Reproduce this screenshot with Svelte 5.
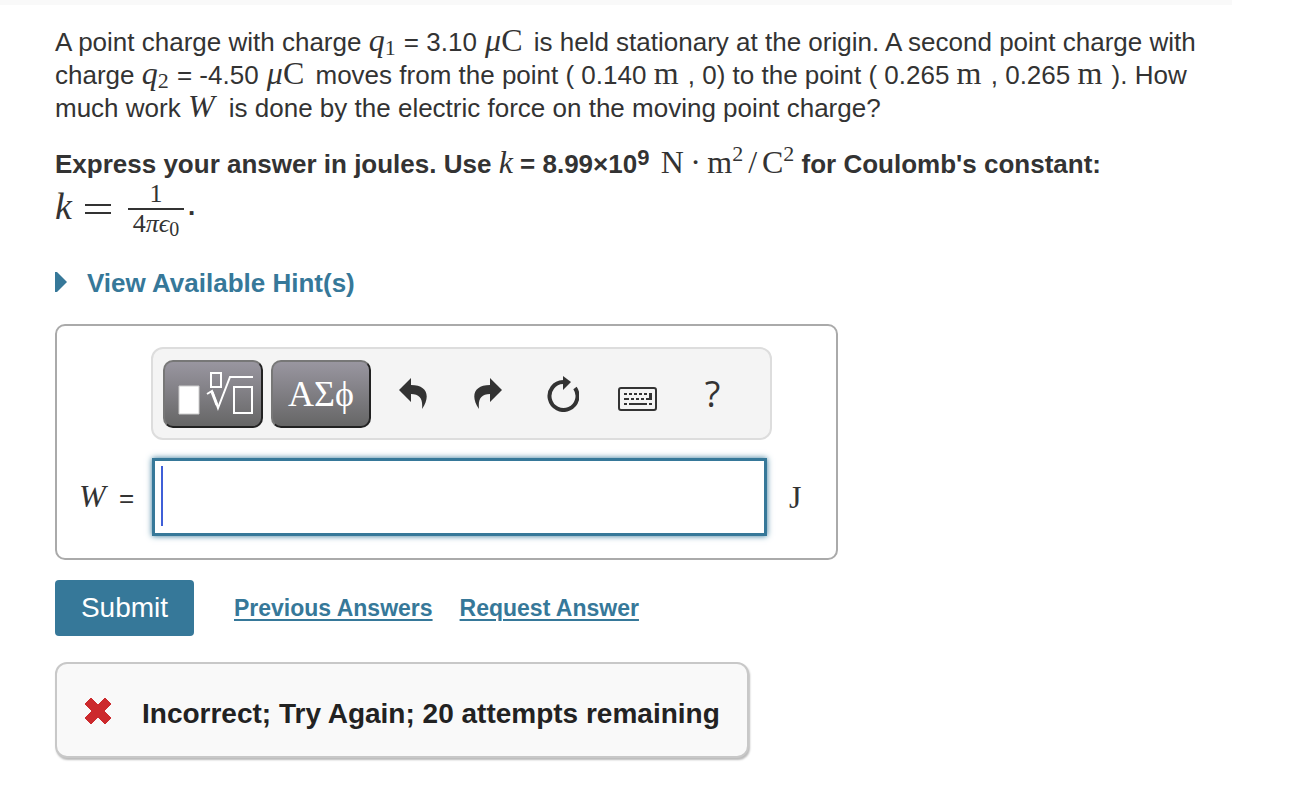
<script>
	let answer = $state('');
	let attempts = $state(20);
</script>

<div class="strip"></div>

<main class="problem">
	<p class="question">
		A point charge with charge <span class="math"><i>q</i><sub>1</sub></span> = 3.10
		<span class="math quantity"><i>μ</i>C</span> is held stationary at the origin. A second point charge with
		charge <span class="math"><i>q</i><sub>2</sub></span> = -4.50
		<span class="math quantity"><i>μ</i>C</span> moves from the point ( 0.140 <span class="math metre">m</span> , 0) to the
		point ( 0.265 <span class="math metre">m</span> , 0.265 <span class="math metre">m</span> ). How much work
		<span class="math work"><i>W</i></span> is done by the electric force on the moving point charge?
	</p>

	<p class="instructions">
		Express your answer in joules. Use <span class="math"><i>k</i></span> = 8.99×10<sup>9</sup>
		<span class="math units">N&thinsp;·&thinsp;m<sup>2</sup><span class="slash">/</span>C<sup>2</sup></span> for Coulomb's constant:
		<span class="equation">
			<span class="math lead"><i>k</i></span>
			<svg class="equals" viewBox="0 0 26 10" aria-label="="><path d="M0 1h26M0 9h26" /></svg>
			<span class="fraction">
				<span class="numerator">1</span>
				<span class="denominator">4<i>πϵ</i><sub>0</sub></span>
			</span>
			<span class="period">.</span>
		</span>
	</p>

	<button type="button" class="hints">
		<svg viewBox="0 0 12 20" aria-hidden="true"><path d="M0 0h2l10 10L2 20H0z" /></svg>
		View Available Hint(s)
	</button>

	<form class="answer-box" onsubmit={(e) => e.preventDefault()}>
		<div class="toolbar">
			<button type="button" class="palette" aria-label="Templates">
				<svg viewBox="0 0 80 44" aria-hidden="true">
					<path d="M6 14h20v28H6z" fill="#fff" stroke="#ccc" stroke-width="1" />
					<path d="M38 1h10v14H38zM61 15h18v26H61z" />
					<path d="M34 22l5-3 6 17L57 5h23" />
					<path d="M39 20l5 13" stroke-width="3" />
				</svg>
			</button>
			<button type="button" class="palette">ΑΣϕ</button>
			<button type="button" class="tool" aria-label="Undo">
				<svg viewBox="0 0 28 32" width="28" height="32">
					<path d="M0 12L12 0v7c16 0 20 11 11 24 1-10-2-15-11-15v8z" />
				</svg>
			</button>
			<button type="button" class="tool" aria-label="Redo">
				<svg viewBox="0 0 28 32" width="28" height="32">
					<path d="M28 12L16 0v7C0 7-4 18 5 31 4 21 7 16 16 16v8z" />
				</svg>
			</button>
			<button type="button" class="tool" aria-label="Reset">
				<svg viewBox="0 0 32 36" width="32" height="36">
					<path d="M16 6a14 14 0 1 0 12 6" fill="none" stroke="#333" stroke-width="4" />
					<path d="M16 0l8 6-8 8z" />
				</svg>
			</button>
			<button type="button" class="tool" aria-label="Keyboard shortcuts">
				<svg viewBox="0 0 40 36" width="40" height="36">
					<rect x="1" y="12" width="37" height="22" rx="2" fill="none" stroke="#333" stroke-width="2" />
					<path
						d="M6 17h3v2H6zM11 17h3v2h-3zM16 17h3v2h-3zM21 17h3v2h-3zM26 17h3v2h-3zM31 17h3v7h-6v-2h3zM6 22h5v2H6zM13 22h3v2h-3zM18 22h3v2h-3zM23 22h3v2h-3zM6 27h3v2H6zM11 27h18v2H11zM31 27h3v2h-3z"
					/>
				</svg>
			</button>
			<button type="button" class="tool help" aria-label="Help">?</button>
		</div>

		<label for="answer"><i>W</i> =</label>
		<div class="field">
			<input id="answer" type="text" autocomplete="off" bind:value={answer} />
			{#if !answer}
				<span class="caret"></span>
			{/if}
		</div>
		<span class="unit">J</span>
	</form>

	<div class="actions">
		<button type="button" class="submit">Submit</button>
		<a href="#previous">Previous Answers</a>
		<a href="#request">Request Answer</a>
	</div>

	<div class="feedback" role="status">
		<svg viewBox="0 0 28 28" aria-hidden="true">
			<path d="M7 1l7 7 7-7 6 6-7 7 7 7-6 6-7-7-7 7-6-6 7-7-7-7z" />
		</svg>
		Incorrect; Try Again; {attempts} attempts remaining
	</div>
</main>

<style>
	:global(body) {
		background: #fff;
	}

	.strip {
		height: 5px;
		margin-right: 72px;
		background: #f9f9f9;
	}

	.problem {
		padding: 21px 72px 40px 55px;
		font-family: 'Liberation Sans', Arial, sans-serif;
		font-size: 26px;
		line-height: 33px;
		color: #333;
	}

	button {
		font-family: inherit;
		cursor: pointer;
	}

	p {
		margin: 0;
	}

	.math {
		font-family: 'Liberation Serif', 'Times New Roman', serif;
		font-size: 32px;
		font-weight: 400;
		line-height: 0;
		white-space: nowrap;
	}

	.quantity {
		margin: 0 4px 0 1px;
	}

	.metre {
		margin-right: 2px;
	}

	.work {
		margin-right: 7px;
	}

	.units {
		margin-left: 4px;
	}

	.slash {
		margin: 0 5px;
	}

	sub,
	sup {
		font-size: 22px;
		line-height: 0;
	}

	.question sub {
		margin-right: 1px;
		vertical-align: -4px;
	}

	sup {
		vertical-align: 8px;
	}

	.units sup {
		vertical-align: 12px;
	}

	.instructions {
		margin-top: 23px;
		font-weight: 700;
	}

	.equation {
		display: flex;
		align-items: center;
		height: 56px;
	}

	.math.lead {
		font-size: 38px;
		margin-right: 13px;
	}

	.lead,
	.period {
		margin-bottom: 6px;
	}

	.equals {
		width: 26px;
		height: 10px;
		margin-right: 17px;
		fill: none;
		stroke: #333;
		stroke-width: 2;
	}

	.fraction {
		display: flex;
		flex-direction: column;
		width: 56px;
		font-family: 'Liberation Serif', 'Times New Roman', serif;
		font-weight: 400;
		line-height: 28px;
		text-align: center;
	}

	.numerator {
		border-bottom: 2px solid #333;
	}

	.denominator sub {
		font-size: 20px;
		vertical-align: -4px;
	}

	.period {
		margin-left: 4px;
	}

	.hints {
		display: flex;
		align-items: center;
		gap: 20px;
		margin-top: 30px;
		padding: 0;
		border: 0;
		background: none;
		color: #367899;
		font-size: 26px;
		font-weight: 700;
		line-height: 33px;
	}

	.hints svg {
		width: 12px;
		height: 20px;
		margin-bottom: 4px;
		fill: #367899;
	}

	.answer-box {
		box-sizing: border-box;
		display: grid;
		grid-template-columns: 95px 1fr 69px;
		row-gap: 18px;
		align-items: center;
		max-width: 783px;
		margin-top: 24px;
		padding: 21px 0 22px;
		border: 2px solid #aaa;
		border-radius: 10px;
	}

	.toolbar {
		box-sizing: border-box;
		grid-column: 2;
		display: flex;
		align-items: center;
		gap: 8px;
		height: 93px;
		margin: 0 -5px 0 -1px;
		padding: 0 10px;
		border: 2px solid #ddd;
		border-radius: 12px;
		background: #f4f4f4;
	}

	.palette {
		box-sizing: border-box;
		width: 100px;
		height: 68px;
		padding: 0;
		border: 2px solid;
		border-color: #777 #222 #222 #777;
		border-radius: 10px;
		background: linear-gradient(#9996a0, #666);
		color: #fff;
		font-family: 'Liberation Serif', 'Times New Roman', serif;
		font-size: 36px;
	}

	.palette svg {
		display: block;
		width: 80px;
		height: 44px;
		margin: 0 auto;
		fill: none;
		stroke: #fff;
		stroke-width: 2;
	}

	.tool {
		display: flex;
		align-items: center;
		justify-content: center;
		width: 67px;
		height: 68px;
		padding: 0;
		border: 0;
		background: none;
		color: #333;
		fill: #333;
	}

	.help {
		font-family: 'Open Sans', sans-serif;
		font-size: 36px;
	}

	label {
		grid-column: 1;
		padding-left: 22px;
		white-space: nowrap;
	}

	label i {
		font-family: 'Liberation Serif', 'Times New Roman', serif;
		font-size: 32px;
		margin-right: 6px;
	}

	.field {
		position: relative;
	}

	input {
		box-sizing: border-box;
		display: block;
		width: 100%;
		height: 78px;
		padding: 0 12px;
		border: 3px solid #367899;
		outline: none;
		box-shadow: 0 0 6px #367899;
		background: #fff;
		font-family: inherit;
		font-size: 26px;
		color: #333;
	}

	.caret {
		position: absolute;
		top: 8px;
		left: 9px;
		width: 2px;
		height: 60px;
		background: #3f5fd8;
		pointer-events: none;
	}

	.unit {
		padding-left: 22px;
		font-family: 'Liberation Serif', 'Times New Roman', serif;
		font-size: 32px;
	}

	.actions {
		display: flex;
		align-items: center;
		gap: 27px;
		margin-top: 20px;
	}

	.actions a {
		color: #367899;
		font-size: 23px;
		font-weight: 700;
		text-underline-offset: 3px;
		text-decoration-thickness: 2px;
	}

	.submit {
		width: 139px;
		height: 56px;
		margin-right: 13px;
		padding: 0;
		border: 0;
		border-radius: 4px;
		background: #367899;
		color: #fff;
		font-size: 28px;
	}

	.feedback {
		box-sizing: border-box;
		display: flex;
		align-items: center;
		gap: 30px;
		width: fit-content;
		min-height: 96px;
		margin-top: 26px;
		padding: 6px 27px 0;
		border: 2px solid #c8c8c8;
		border-radius: 12px;
		background: #f9f9f9;
		box-shadow: 1px 2px 2px #bbb;
		color: #222;
		font-size: 28px;
		font-weight: 700;
	}

	.feedback svg {
		width: 28px;
		height: 28px;
		margin-bottom: 4px;
		fill: #cc2a2d;
		stroke: #cc2a2d;
		stroke-linejoin: round;
	}
</style>
